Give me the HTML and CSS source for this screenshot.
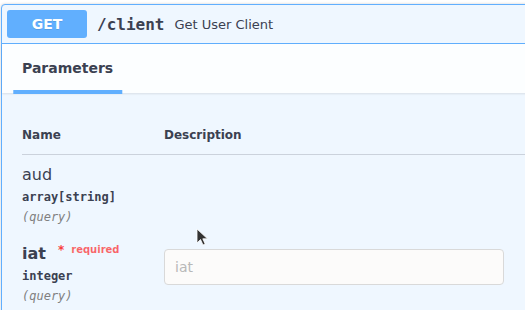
FILE: index.html
```html
<!DOCTYPE html>
<html>
<head>
<meta charset="utf-8">
<link rel="stylesheet" href="styles.css">
</head>
<body>
<div class="opblock">
  <div class="summary">
    <span class="method">GET</span>
    <span class="path">/client</span>
    <span class="desc">Get User Client</span>
  </div>
  <div class="section-header">
    <h4 class="tab"><span class="tab-label">Parameters</span></h4>
  </div>
  <div class="table-container">
    <div class="row head">
      <div class="col-name">Name</div>
      <div class="col-desc">Description</div>
    </div>
    <div class="row param first">
      <div class="col-name">
        <div class="pname">aud</div>
        <div class="ptype">array[string]</div>
        <div class="pin">(query)</div>
      </div>
      <div class="col-desc"></div>
    </div>
    <div class="row param second">
      <div class="col-name">
        <div class="pname bold">iat<span class="star">*</span><span class="req">required</span></div>
        <div class="ptype">integer</div>
        <div class="pin">(query)</div>
      </div>
      <div class="col-desc">
        <input class="field" type="text" placeholder="iat">
      </div>
    </div>
  </div>
</div>
<svg class="cursor" width="14" height="20" viewBox="0 0 14 20">
  <path d="M1 1 L1 15 L4.5 11.5 L7 17 L9.2 16 L6.8 10.8 L11.5 10.8 Z" fill="#333" stroke="#fff" stroke-width="0.8" stroke-linejoin="round"/>
</svg>
</body>
</html>
```
FILE: styles.css
```css
html, body {
  margin: 0;
  padding: 0;
  background: #ffffff;
  overflow: hidden;
  width: 525px;
  height: 310px;
  font-family: "DejaVu Sans", sans-serif;
  color: #3b4151;
  position: relative;
}

.opblock {
  margin: 4px 0 0 1px;
  width: 600px;
  border: 1px solid #61affe;
  border-radius: 4px;
  background: #eff7ff;
  box-shadow: 0 0 3px rgba(0, 0, 0, 0.19);
  min-height: 400px;
}

.summary {
  display: flex;
  align-items: center;
  padding: 5px;
  border-bottom: 1px solid #61affe;
}

.method {
  display: inline-block;
  width: 80px;
  padding: 6px 0;
  text-align: center;
  background: #61affe;
  color: #fff;
  font-size: 14px;
  font-weight: 700;
  line-height: 16px;
  border-radius: 3px;
  text-shadow: 0 1px 0 rgba(0, 0, 0, 0.1);
}

.path {
  margin-left: 10px;
  font-family: "DejaVu Sans Mono", monospace;
  font-size: 16px;
  font-weight: 700;
  color: #3b4151;
}

.desc {
  margin-left: 10px;
  font-size: 13px;
  color: #3b4151;
}

.section-header {
  height: 49px;
  padding: 0 20px;
  background: rgba(255, 255, 255, 0.8);
  box-shadow: 0 1px 2px rgba(0, 0, 0, 0.1);
  display: flex;
  align-items: center;
}

.tab {
  margin: 0;
  font-size: 14px;
  font-weight: 700;
  line-height: 17px;
}

.tab-label {
  position: relative;
  display: inline-block;
}

.tab-label::after {
  content: "";
  position: absolute;
  left: 50%;
  bottom: -17px;
  width: 120%;
  height: 4px;
  transform: translateX(-50%);
  background: #61affe;
}

.table-container {
  padding: 23px 0 0 20px;
}

.row {
  display: flex;
}

.col-name {
  width: 142px;
  flex: none;
}

.col-desc {
  flex: 1;
}

.row.head {
  font-size: 12px;
  font-weight: 700;
  line-height: 14px;
  padding: 12px 0;
  border-bottom: 1px solid rgba(59, 65, 81, 0.2);
}

.row.param {
  padding-top: 10px;
}

.row.first {
  min-height: 69px;
}

.pname {
  font-size: 16px;
  line-height: 19px;
  font-weight: 400;
}

.pname.bold {
  font-weight: 700;
}

.star {
  color: #f93e3e;
  font-size: 12px;
  font-weight: 700;
  line-height: 0;
  position: relative;
  top: -5px;
  padding: 0 7px 0 12px;
}

.req {
  color: rgba(255, 0, 0, 0.6);
  font-size: 10px;
  font-weight: 700;
  line-height: 0;
  position: relative;
  top: -6px;
}

.ptype {
  font-family: "DejaVu Sans Mono", monospace;
  font-size: 12px;
  font-weight: 700;
  line-height: 16px;
  padding: 5px 0;
}

.pin {
  font-family: "DejaVu Sans Mono", monospace;
  font-size: 12px;
  font-style: italic;
  line-height: 15px;
  color: #808080;
}

.field {
  display: block;
  box-sizing: border-box;
  width: 340px;
  height: 36px;
  margin: 5px 0 0;
  padding: 8px 10px;
  border: 1px solid #d9d9d9;
  border-radius: 4px;
  background: #fcfbfa;
  font-family: "DejaVu Sans", sans-serif;
  font-size: 14px;
  color: #3b4151;
  outline: none;
}

.field::placeholder {
  color: #b8b8b8;
}

.cursor {
  position: absolute;
  left: 196px;
  top: 228px;
}
```
